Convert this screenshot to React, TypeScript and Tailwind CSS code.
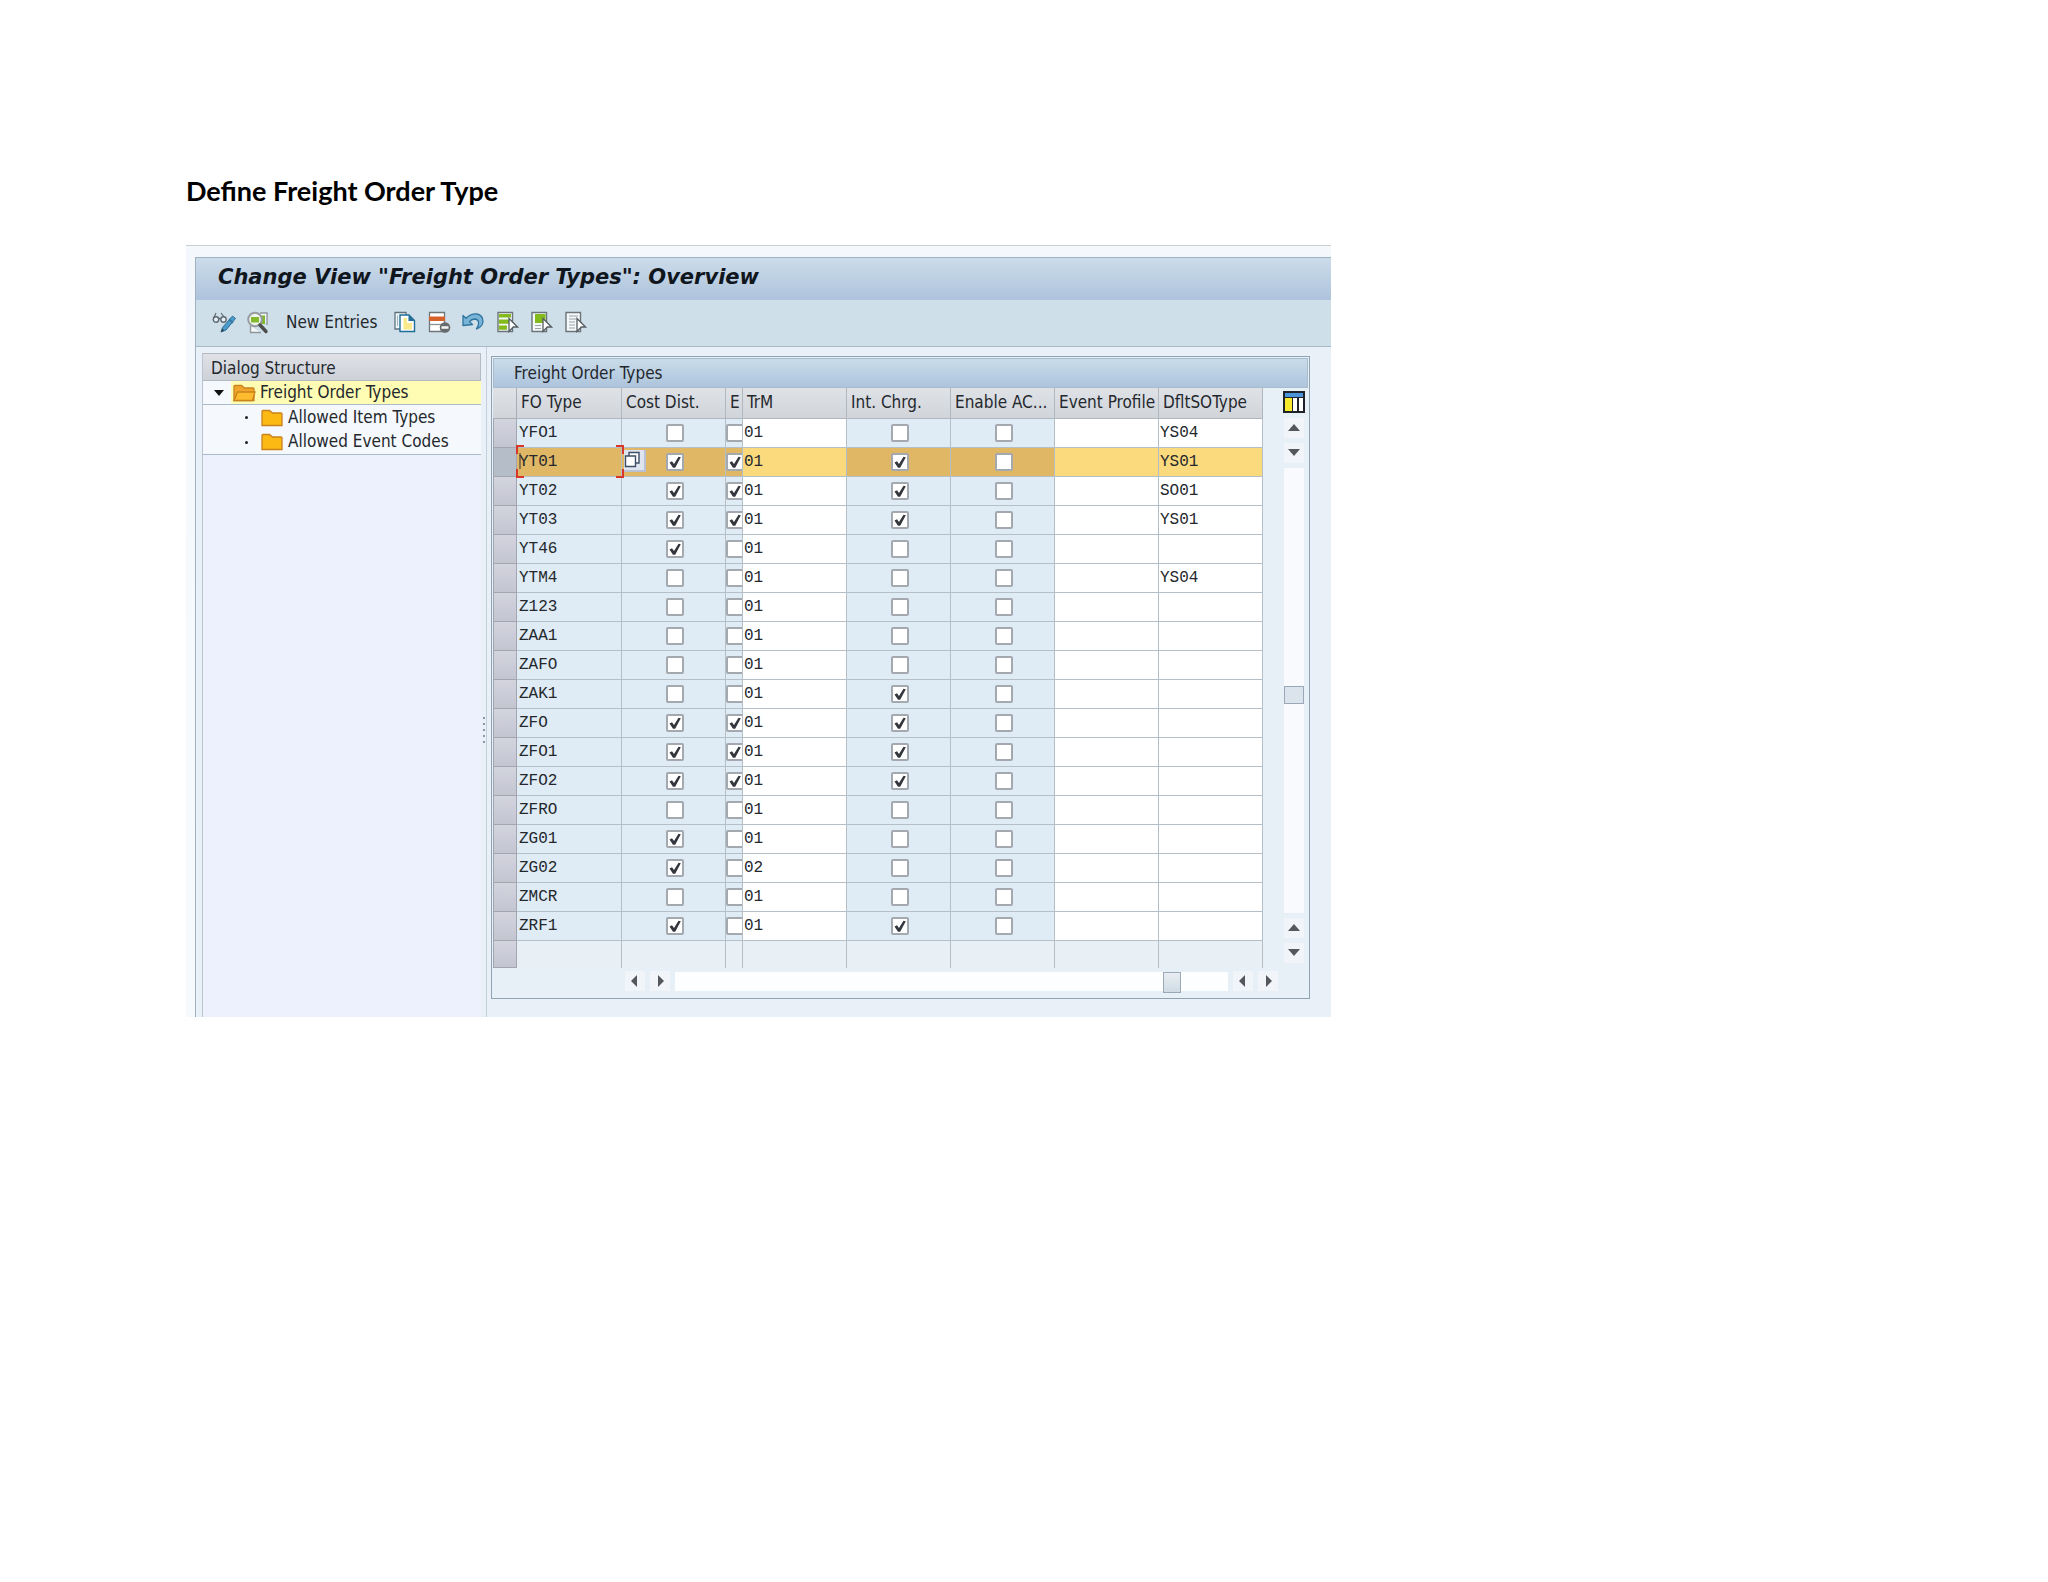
import { ReactNode } from "react"

type Row = {
	type: string
	cost: boolean
	exec: boolean
	trm: string
	charge: boolean
	so: string
}

const row = (type: string, cost: number, exec: number, charge: number, so = "", trm = "01"): Row => ({
	type,
	cost: !!cost,
	exec: !!exec,
	charge: !!charge,
	so,
	trm,
})

const rows: Row[] = [
	row("YFO1", 0, 0, 0, "YS04"),
	row("YT01", 1, 1, 1, "YS01"),
	row("YT02", 1, 1, 1, "SO01"),
	row("YT03", 1, 1, 1, "YS01"),
	row("YT46", 1, 0, 0),
	row("YTM4", 0, 0, 0, "YS04"),
	row("Z123", 0, 0, 0),
	row("ZAA1", 0, 0, 0),
	row("ZAFO", 0, 0, 0),
	row("ZAK1", 0, 0, 1),
	row("ZFO", 1, 1, 1),
	row("ZFO1", 1, 1, 1),
	row("ZFO2", 1, 1, 1),
	row("ZFRO", 0, 0, 0),
	row("ZG01", 1, 0, 0),
	row("ZG02", 1, 0, 0, "", "02"),
	row("ZMCR", 0, 0, 0),
	row("ZRF1", 1, 0, 1),
]

const SELECTED = "YT01"

const headers = [
	"FO Type",
	"Cost Dist.",
	"E",
	"TrM",
	"Int. Chrg.",
	"Enable AC...",
	"Event Profile",
	"DfltSOType",
]

/* Toolbar icons, all on a 24x24 grid */
function Icon({ children }: { children: ReactNode }) {
	return (
		<svg viewBox="0 0 24 24" className="size-6" fill="none" aria-hidden="true">
			{children}
		</svg>
	)
}

function DisplayChangeIcon() {
	return (
		<Icon>
			<path d="M1.5 7.5 L4 2 M9 2 L12.5 6.5" stroke="#5d6870" strokeWidth="1.2" />
			<circle cx="4" cy="8.5" r="2.7" stroke="#5d6870" strokeWidth="1.4" fill="#e6eff5" />
			<circle cx="11.5" cy="8.5" r="2.7" stroke="#5d6870" strokeWidth="1.4" fill="#e6eff5" />
			<path d="M6.7 8 Q7.8 7 8.8 8" stroke="#5d6870" strokeWidth="1.2" />
			<path d="M20.5 5 L23.5 7.5 L14 19 L9 21 L10.5 16.5 Z" fill="#4a9bc9" stroke="#2f6f97" strokeWidth="1" />
			<path d="M9 21 L10.2 17.6 L12.4 19.5 Z" fill="#33424d" />
			<path d="M17 8 L21 12" stroke="#2f6f97" strokeWidth="1.2" />
		</Icon>
	)
}

function FindIcon() {
	return (
		<Icon>
			<path d="M14 2 H21 V14 M4.5 15 V21.5 H15" stroke="#8f979c" strokeWidth="1.4" fill="#f4f7f8" />
			<path d="M15 4.5 H19 V13 H15 Z" fill="#7fb62c" />
			<circle cx="9" cy="8.5" r="6.8" fill="#eef5ee" stroke="#979d9f" strokeWidth="2" />
			<path d="M5 6 H13 V11.5 H5 Z" fill="#84b92d" />
			<path d="M14 14 L20 20.5" stroke="#4b4b4b" strokeWidth="3.4" strokeLinecap="round" />
		</Icon>
	)
}

function CopyIcon() {
	return (
		<Icon>
			<path d="M2 1.5 H13 V18 H2 Z" fill="#f1f7fa" stroke="#60727d" strokeWidth="1.3" />
			<path d="M4.5 4.5 V15" stroke="#9fb3bf" strokeWidth="1" />
			<path d="M7 4 H16 L21.5 9.5 V20.5 H7 Z" fill="#fff" stroke="#1f6c96" strokeWidth="1.4" />
			<path d="M15.5 4 V10 H21.5 Z" fill="#1f6c96" />
			<path d="M10.5 7 H14 V12 H19 V18.5 H10.5 Z" fill="#f8e98b" />
		</Icon>
	)
}

function DeleteIcon() {
	return (
		<Icon>
			<path d="M2.5 1.5 H17.5 V20.5 H2.5 Z" fill="#fff" stroke="#6f767a" strokeWidth="1.3" />
			<path d="M2 5.5 H18 V10 H2 Z" fill="#d4622a" />
			<path d="M3 13.5 H17" stroke="#8b9194" strokeWidth="1.3" />
			<circle cx="18" cy="16.5" r="5.3" fill="#666b6e" />
			<path d="M14.5 16.5 H21.5" stroke="#f2f2f2" strokeWidth="2.6" />
		</Icon>
	)
}

function UndoIcon() {
	return (
		<Icon>
			<path
				d="M2 4.5 L5 7.2 Q10 2.5 16 3 Q22 4.2 22 10.5 Q21.5 16 15.5 18 Q18 14.5 17.6 11.5 Q17 8 13.5 8 Q10.5 8.2 8.5 10.6 L11.5 13.5 L2 14.5 Z"
				fill="#79b4d8"
				stroke="#2f759f"
				strokeWidth="1.3"
				strokeLinejoin="round"
			/>
		</Icon>
	)
}

function SelectIcon({ kind }: { kind: "all" | "block" | "none" }) {
	return (
		<Icon>
			<path d="M3 1.5 H17.5 V20.5 H3 Z" fill="#f6f9fa" stroke="#6b7478" strokeWidth="1.4" />
			{kind === "all" && (
				<path d="M4 3 H16 V6.6 H4 Z M4 8.5 H14 V12.8 H4 Z M4 14.5 H12 V18.8 H4 Z" fill="#83ba1c" />
			)}
			{kind === "block" && (
				<>
					<path d="M6 3 H16.5 V12 H6 Z" fill="#83ba1c" />
					<path d="M6 14.5 H12 M6 17.5 H12" stroke="#9aa1a5" strokeWidth="1" />
				</>
			)}
			{kind === "none" && (
				<path d="M6 5 H15 M6 8 H13 M6 11 H12 M6 14 H12 M6 17 H12" stroke="#9aa1a5" strokeWidth="1.2" />
			)}
			<path d="M14 7.5 L22.5 16 H18.3 L14 20.5 Z" fill="#fff" stroke="#555d61" strokeWidth="1.3" />
		</Icon>
	)
}

function Folder({ open }: { open?: boolean }) {
	return (
		<svg viewBox="0 0 23 18" className="w-[23px] h-[18px] shrink-0" aria-hidden="true">
			<path
				d="M1 16.5 V2.5 Q1 1.5 2 1.5 H8.5 L11.5 4 H20 Q21 4 21 5 V16.5 Z"
				fill={open ? "#f0a62a" : "#fdb913"}
				stroke="#c9821c"
				strokeWidth="1.3"
			/>
			{open && (
				<path d="M1 16.5 L4.5 8 H22 L19.5 16.5 Z" fill="#fdbb2e" stroke="#c9821c" strokeWidth="1.3" />
			)}
		</svg>
	)
}

function Check({ label, checked }: { label: string; checked?: boolean }) {
	return (
		<span className="relative block size-[18px] mx-auto">
			<input
				type="checkbox"
				aria-label={label}
				defaultChecked={checked}
				className="peer block appearance-none size-[18px] rounded-[2px] border-2 border-[#a3a9ae] bg-white"
			/>
			<svg
				viewBox="0 0 18 18"
				className="absolute inset-0 hidden peer-checked:block pointer-events-none"
				aria-hidden="true"
			>
				<path d="M3.5 9.5 L6 8.3 L8 11 L12.5 3.8 L14.8 4.2 L9.2 14.8 H7 Z" fill="#33373d" />
			</svg>
		</span>
	)
}

const arrowPaths = {
	up: "M10 6 L16 13 H4 Z",
	down: "M10 13 L16 6 H4 Z",
	left: "M6 10 L12 4 V16 Z",
	right: "M14 10 L8 4 V16 Z",
}

function Arrow({ dir }: { dir: keyof typeof arrowPaths }) {
	return (
		<button type="button" aria-label={`Scroll ${dir}`} className="block size-5 bg-[#f1f5fa]">
			<svg viewBox="0 0 20 20" className="size-5" aria-hidden="true">
				<path d={arrowPaths[dir]} fill="#54585b" />
			</svg>
		</button>
	)
}

function TreePanel() {
	return (
		<aside className="w-[279px] ml-[6px] mt-[6px] shrink-0 border-l border-[#b9c4cf] bg-[#edf1fd]">
			<h2 className="h-7 pl-2 border border-l-0 border-[#b3bac2] bg-linear-to-b from-[#dfe1e6] to-[#cdd1d8] leading-7">
				Dialog Structure
			</h2>
			<ul>
				<li className="flex items-center h-6 border-b border-[#a9bac8] bg-[#fffdb4]">
					<span className="flex items-center justify-center w-7 h-full pl-1 bg-[#f5f9fd]">
						<svg viewBox="0 0 10 6" className="w-[10px] h-[6px]" aria-hidden="true">
							<path d="M0 0 H10 L5 6 Z" fill="#111" />
						</svg>
					</span>
					<a href="#types" className="flex items-center gap-1 pl-[2px]">
						<Folder open />
						Freight Order Types
					</a>
				</li>
				{["Allowed Item Types", "Allowed Event Codes"].map((item) => (
					<li key={item} className="flex items-center h-[25px] bg-[#f5f9fd] last:border-b border-[#a9bac8]">
						<span className="size-[3px] ml-[42px] mr-3 rounded-full bg-[#222]" />
						<a href="#item" className="flex items-center gap-1 pl-px">
							<Folder />
							{item}
						</a>
					</li>
				))}
			</ul>
		</aside>
	)
}

function TableRow({ data }: { data: Row }) {
	const selected = data.type === SELECTED
	const locked = selected ? "bg-[#e0b765]" : "bg-[#dfebf5]"
	const editable = selected ? "bg-[#fbd97d]" : "bg-white"
	const line = "border-r border-b border-[#b5bfc8]"

	return (
		<tr className="h-[29px]">
			<td
				className={`border border-t-0 border-[#a2a6b0] ${selected ? "bg-[#b4bdc8]" : "bg-linear-to-b from-[#d3d4de] to-[#c3c5d1]"}`}
			/>
			<td className={`relative ${line} ${locked} p-0 pl-[2px]`}>
				{data.type}
				{selected && (
					<>
						<svg
							viewBox="0 0 108 33"
							className="absolute -left-px -top-[3px] w-[108px] h-[33px] z-10 pointer-events-none"
							fill="none"
							stroke="#d8362b"
							strokeWidth="2"
							aria-hidden="true"
						>
							<path d="M8 1 H1 V9 M1 24 V32 H8 M100 1 H107 V9 M107 24 V32 H100" />
							<path d="M4 8 V24" stroke="#333" strokeWidth="1" />
						</svg>
						<button
							type="button"
							aria-label="Possible entries"
							className="absolute left-[107px] top-[2px] z-10 size-[22px] bg-[#dfe5ee] border-r-2 border-b-2 border-[#b9c1d3]"
						>
							<svg viewBox="0 0 20 20" className="size-5" fill="#fff" stroke="#3d4f66" strokeWidth="1.4">
								<path d="M5 2.5 H15 V13 H5 Z" />
								<path d="M1.5 6 H11.5 V16.5 H1.5 Z" />
							</svg>
						</button>
					</>
				)}
			</td>
			<td className={`${line} ${locked} p-0 pl-[2px]`}>
				<Check label={`${data.type} cost distribution`} checked={data.cost} />
			</td>
			<td className={`${line} ${locked} p-0 overflow-hidden`}>
				<Check label={`${data.type} execution`} checked={data.exec} />
			</td>
			<td className={`${line} ${editable} p-0 pl-px`}>{data.trm}</td>
			<td className={`${line} ${locked} p-0 pl-[2px]`}>
				<Check label={`${data.type} internal charge`} checked={data.charge} />
			</td>
			<td className={`${line} ${locked} p-0 pl-[2px]`}>
				<Check label={`${data.type} enable AC`} />
			</td>
			<td className={`${line} ${editable}`} />
			<td className={`${line} ${editable} p-0 pl-px`}>{data.so}</td>
		</tr>
	)
}

function OrderTable() {
	return (
		<table className="table-fixed border-separate border-spacing-0 w-[770px]">
			<colgroup>
				<col className="w-[24px]" />
				<col className="w-[105px]" />
				<col className="w-[104px]" />
				<col className="w-[17px]" />
				<col className="w-[104px]" />
				<col className="w-[104px]" />
				<col className="w-[104px]" />
				<col className="w-[104px]" />
				<col className="w-[104px]" />
			</colgroup>
			<thead>
				<tr className="h-[31px] bg-linear-to-b from-[#dfe2e7] to-[#d0d4d9]">
					<th className="border-r border-b border-[#a9adb6]" />
					{headers.map((title) => (
						<th
							key={title}
							className="p-0 pl-1 border-r border-b border-[#b0b7bf] text-left font-normal whitespace-nowrap"
						>
							{title}
						</th>
					))}
				</tr>
			</thead>
			<tbody className="font-['Liberation_Mono',monospace] text-[16px]">
				{rows.map((data) => (
					<TableRow key={data.type} data={data} />
				))}
				<tr className="h-[27px]">
					<td className="border border-t-0 border-[#a2a6b0] bg-linear-to-b from-[#d3d4de] to-[#c3c5d1]" />
					{headers.map((title) => (
						<td key={title} className="border-r border-[#b5bfc8] bg-[#e8eff5]" />
					))}
				</tr>
			</tbody>
		</table>
	)
}

function VerticalScroll() {
	return (
		<div className="flex flex-col items-center w-[22px] mr-[3px] ml-auto gap-[5px] pb-[5px]">
			<button type="button" aria-label="Table settings" className="block mt-[3px]">
				<svg viewBox="0 0 22 22" className="size-[22px]" aria-hidden="true">
					<path d="M0 0 H22 V22 H0 Z" fill="#1d222b" />
					<path d="M2 2 H20 V6 H2 Z" fill="#4b93d8" />
					<path d="M2 7 H9 V20 H2 Z" fill="#f7e92c" />
					<path d="M10 7 H14 V20 H10 Z M16 7 H20 V20 H16 Z" fill="#fff" />
				</svg>
			</button>
			<Arrow dir="up" />
			<Arrow dir="down" />
			<div className="flex flex-col justify-center items-center w-5 grow pt-2 bg-[#f8fafd]">
				<div className="w-5 h-[18px] border border-[#9aa8b8] bg-[#dbe4ed]" />
			</div>
			<Arrow dir="up" />
			<Arrow dir="down" />
		</div>
	)
}

function HorizontalScroll() {
	return (
		<div className="flex items-center h-[28px] ml-[132px] mr-[30px] pb-1 mt-px gap-[5px]">
			<Arrow dir="left" />
			<Arrow dir="right" />
			<div className="flex justify-end grow h-[19px] bg-[#fdfeff]">
				<div className="w-[18px] h-[21px] mr-[47px] border border-[#9aa8b8] bg-linear-to-b from-[#e9eef3] to-[#cfdbe4]" />
			</div>
			<Arrow dir="left" />
			<Arrow dir="right" />
		</div>
	)
}

function App() {
	return (
		<main className="min-h-screen bg-white pt-[173px] pl-[186px] font-['DejaVu_Sans_Condensed','DejaVu_Sans',sans-serif] text-[17px] text-[#24282d]">
			<h1 className="h-[72px] font-['Lato',sans-serif] font-bold text-[27px] leading-9 text-black">
				Define Freight Order Type
			</h1>

			<section className="w-[1145px] border-t border-[#c9ced3] bg-linear-to-b from-[#f4f8fc] to-[#f7fafd]">
				<div className="h-[11px]" />
				<div className="ml-[9px] border-l border-t border-[#9fb2c2] bg-[#e9f0f8]">
					<header className="flex items-center h-[42px] pl-[22px] pb-[2px] bg-linear-to-b from-[#cbdcea] to-[#aec3dc]">
						<h2 className="font-['DejaVu_Sans',sans-serif] font-bold italic text-[21px] text-[#10161d]">
							Change View "Freight Order Types": Overview
						</h2>
					</header>

					<nav className="flex items-center h-[47px] pl-4 gap-[10px] border-b border-[#a9bac8] bg-[#cfdfe9]">
						<button type="button" aria-label="Display / change">
							<DisplayChangeIcon />
						</button>
						<button type="button" aria-label="Find">
							<FindIcon />
						</button>
						<button type="button" className="px-[6px]">
							New Entries
						</button>
						<button type="button" aria-label="Copy as">
							<CopyIcon />
						</button>
						<button type="button" aria-label="Delete">
							<DeleteIcon />
						</button>
						<button type="button" aria-label="Undo change">
							<UndoIcon />
						</button>
						<button type="button" aria-label="Select all">
							<SelectIcon kind="all" />
						</button>
						<button type="button" aria-label="Select block">
							<SelectIcon kind="block" />
						</button>
						<button type="button" aria-label="Deselect all">
							<SelectIcon kind="none" />
						</button>
					</nav>

					<div className="flex">
						<TreePanel />
						<div className="flex flex-col items-center justify-center gap-1 w-[6px] pt-24 border-r border-[#c3d0dc]">
							{[1, 2, 3, 4, 5].map((dot) => (
								<span key={dot} className="size-[2px] bg-[#8d98a5]" />
							))}
						</div>
						<div className="grow pl-[4px] pt-[9px] pr-[21px] pb-[18px]">
							<div className="border border-[#8fa3b5] bg-[#e8f0f7] p-px">
								<h2 className="h-[30px] pl-5 border border-[#a9bccd] bg-linear-to-b from-[#c9dcea] to-[#adc4dc] leading-7">
									Freight Order Types
								</h2>
								<div className="flex">
									<OrderTable />
									<VerticalScroll />
								</div>
								<HorizontalScroll />
							</div>
						</div>
					</div>
				</div>
			</section>
		</main>
	)
}

export default App
